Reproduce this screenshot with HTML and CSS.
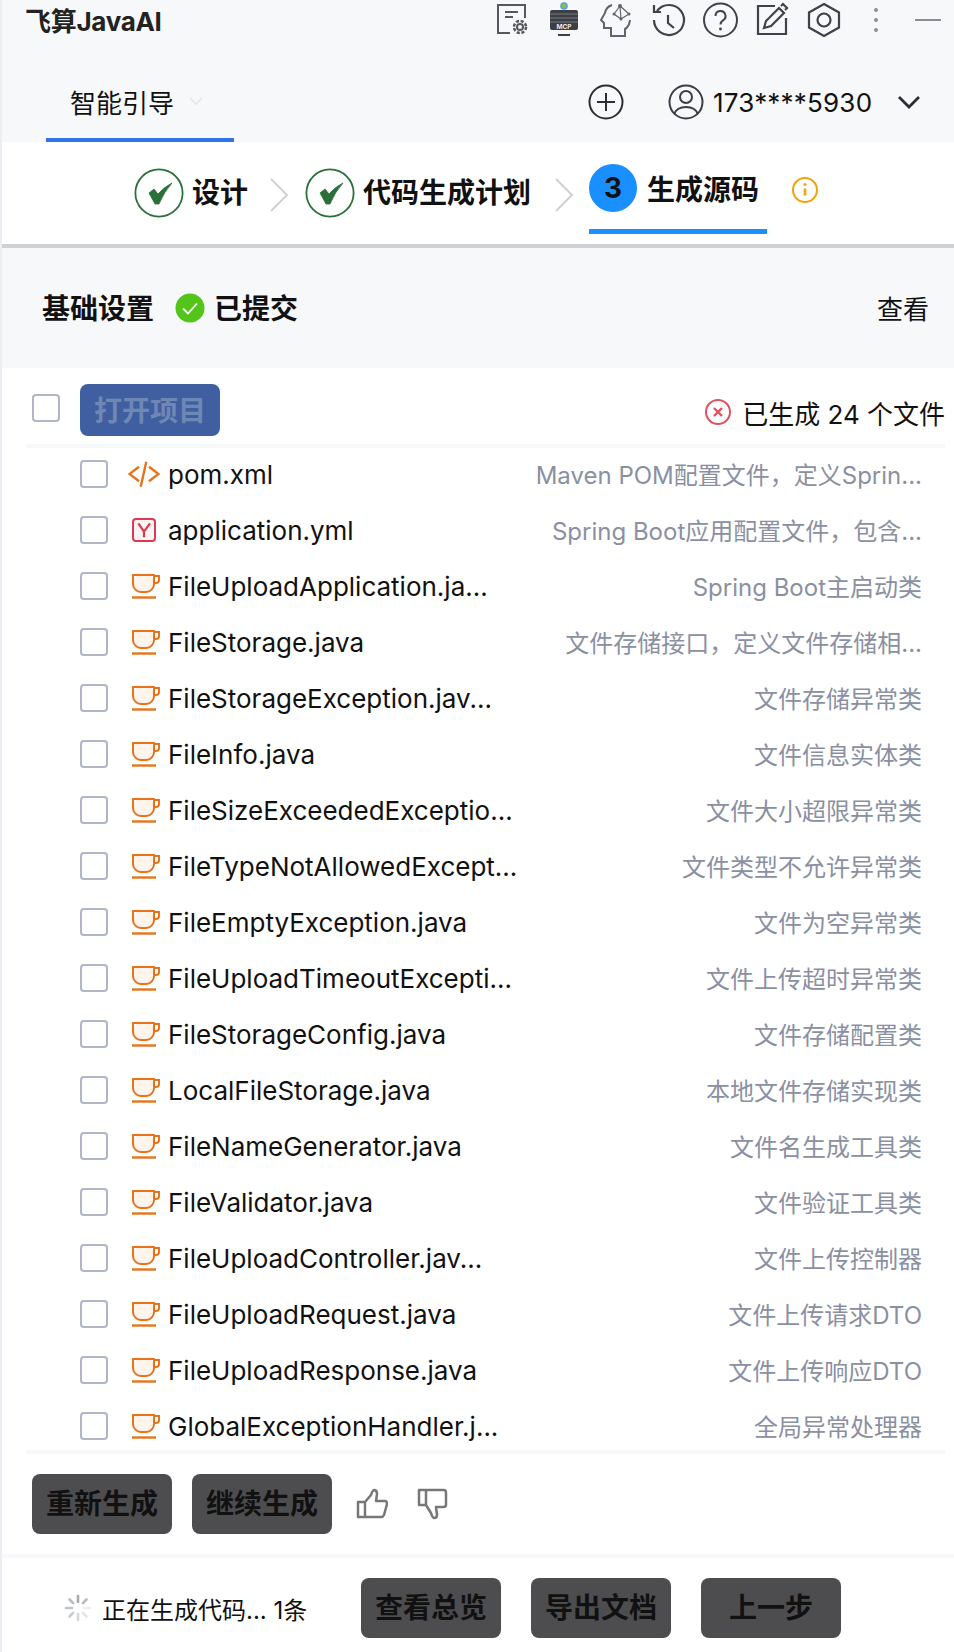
FILE: index.html
```html
<!DOCTYPE html>
<html lang="zh-CN">
<head>
    <meta charset="UTF-8">
    <meta name="viewport" content="width=device-width, initial-scale=1.0">
    <title>飞算JavaAI</title>
    <link rel="stylesheet" href="styles.css">
</head>
<body>
    <svg class="defs" width="0" height="0">
        <symbol id="cup" viewBox="0 0 32 30">
            <path d="M5 4h21v9a8 8 0 0 1-8 8h-5a8 8 0 0 1-8-8z" fill="#fff4ec" stroke="#e8731a" stroke-width="2"/>
            <path d="M26 5h5v4a3 3 0 0 1-3 3h-2" fill="none" stroke="#e8731a" stroke-width="2"/>
            <path d="M4 26.500h24" stroke="#e8731a" stroke-width="2.400"/>
        </symbol>
        <symbol id="tick" viewBox="0 0 50 50">
            <circle cx="25" cy="25" r="23.600" fill="#fff" stroke="#2a7038" stroke-width="1.800"/>
            <path d="M15 25l5-4 4 5q6-7 14-11-8 9-13 21h-4z" fill="#2a7038" stroke="#2a7038" stroke-width="0.800" stroke-linejoin="round"/>
        </symbol>
        <symbol id="step-arrow" viewBox="0 0 20 34">
            <path d="M2 1l16 16L2 33" fill="none" stroke="#cfcfcf" stroke-width="1.800"/>
        </symbol>
    </svg>

    <header class="top">
        <div class="title-bar">
            <span class="app-name">飞算JavaAI</span>
            <div class="tools">
                <svg class="tool" viewBox="0 0 36 36" fill="none" stroke="#55585f" stroke-width="2">
                    <path d="M15 31H3V3h27v13"/>
                    <path d="M10 10h13M10 15h8"/>
                    <circle cx="25" cy="25" r="3"/>
                    <circle cx="25" cy="25" r="6" stroke-dasharray="3.100 1.600" stroke-width="2.600"/>
                </svg>
                <svg class="tool" viewBox="0 0 36 36">
                    <circle cx="17" cy="4" r="3" fill="#8bc34a" stroke="#5a9fe0" stroke-width="1.600"/>
                    <rect x="3" y="8" width="28" height="20" rx="2" fill="#3c3f46"/>
                    <path d="M3 12h28M3 16h28M3 20h28" stroke="#777a80" stroke-width="1"/>
                    <text class="mcp" x="17" y="26.500" text-anchor="middle">MCP</text>
                    <path d="M11 33h12" stroke="#3c3f46" stroke-width="2"/>
                </svg>
                <svg class="tool" viewBox="0 0 36 36" fill="none" stroke="#5f646d" stroke-width="2">
                    <path d="M13 3Q7 5 6 11L2 18l3 3v5h7v8h14v-7q4-2 5-9"/>
                    <path d="M21 4l-6 8 7 5 8-5zM21 4l1 13" stroke-width="1.200"/>
                    <circle cx="21" cy="4" r="2" fill="#5f646d" stroke="none"/>
                    <circle cx="15" cy="12" r="1.500" fill="#5f646d" stroke="none"/>
                    <circle cx="30" cy="12" r="1.500" fill="#5f646d" stroke="none"/>
                    <circle cx="22" cy="17" r="1.500" fill="#5f646d" stroke="none"/>
                </svg>
                <svg class="tool" viewBox="0 0 36 36" fill="none" stroke="#3f424a" stroke-width="2.200">
                    <path d="M6 9a15 15 0 1 1-3 9"/>
                    <path d="M3 3v7h7"/>
                    <path d="M17 13v8l6 5"/>
                </svg>
                <svg class="tool" viewBox="0 0 36 36" fill="none" stroke="#3f424a" stroke-width="2">
                    <circle cx="17.500" cy="18" r="16.500"/>
                    <path d="M12.500 14a5 5 0 1 1 7.500 4.300q-2.500 1.600-2.500 4.200"/>
                    <circle cx="17.500" cy="27" r="1.400" fill="#3f424a" stroke="none"/>
                </svg>
                <svg class="tool" viewBox="0 0 36 36" fill="none" stroke="#3f424a" stroke-width="2.200">
                    <path d="M20 4H3v28h28V16"/>
                    <path d="M9 26l2-7L24 6l5 5-13 13zM26 4l2-2 4 4-2 2"/>
                </svg>
                <svg class="tool" viewBox="0 0 36 36" fill="none" stroke="#3f424a" stroke-width="2.200">
                    <path d="M17 2l15 8.500v15L17 34 2 25.500v-15z"/>
                    <circle cx="17" cy="18" r="6.500"/>
                </svg>
                <svg class="tool" viewBox="0 0 36 36" fill="#8a8e98">
                    <circle cx="17" cy="8" r="2"/>
                    <circle cx="17" cy="18" r="2"/>
                    <circle cx="17" cy="28" r="2"/>
                </svg>
                <svg class="tool" viewBox="0 0 36 36">
                    <path d="M4 18h26" stroke="#8a8e98" stroke-width="2"/>
                </svg>
            </div>
        </div>
        <div class="tab-bar">
            <div class="tab">
                <span>智能引导</span>
                <svg class="tab-caret" viewBox="0 0 16 10" fill="none" stroke="#e4e6ea" stroke-width="1.600"><path d="M2 2l6 6 6-6"/></svg>
            </div>
            <svg class="tab-plus" viewBox="0 0 36 36" fill="none" stroke="#2b2e35" stroke-width="2">
                <circle cx="18" cy="18" r="16.500"/>
                <path d="M18 9v18M9 18h18"/>
            </svg>
            <svg class="tab-user" viewBox="0 0 36 36" fill="none" stroke="#3a3d45" stroke-width="2">
                <circle cx="18" cy="18" r="16.500"/>
                <circle cx="18" cy="13" r="6"/>
                <path d="M6 30q3-7 12-7t12 7"/>
            </svg>
            <span class="phone">173****5930</span>
            <svg class="tab-more" viewBox="0 0 24 14" fill="none" stroke="#2b2e35" stroke-width="2.800"><path d="M2 2l10 10L22 2"/></svg>
        </div>
    </header>

    <nav class="steps">
        <div class="step">
            <svg class="step-icon"><use href="#tick"/></svg>
            <span class="step-label">设计</span>
        </div>
        <svg class="step-arrow"><use href="#step-arrow"/></svg>
        <div class="step">
            <svg class="step-icon"><use href="#tick"/></svg>
            <span class="step-label">代码生成计划</span>
        </div>
        <svg class="step-arrow step-arrow-last"><use href="#step-arrow"/></svg>
        <div class="step step-current">
            <span class="step-num">3</span>
            <span>生成源码</span>
        </div>
        <svg class="step-info" viewBox="0 0 26 26" fill="none" stroke="#f0a30a" stroke-width="2">
            <circle cx="13" cy="13" r="12"/>
            <path d="M13 11.500v7" stroke-width="2.600"/>
            <circle cx="13" cy="7.500" r="1.500" fill="#f0a30a" stroke="none"/>
        </svg>
    </nav>

    <section class="base-bar">
        <strong>基础设置</strong>
        <svg class="done" viewBox="0 0 30 30">
            <circle cx="15" cy="15" r="14.500" fill="#52c41a"/>
            <path d="M8 15.500l5 5 9-10" fill="none" stroke="#fff" stroke-width="1.800"/>
        </svg>
        <strong>已提交</strong>
        <a class="base-view">查看</a>
    </section>

    <main class="files">
        <div class="files-head">
            <span class="check"></span>
            <span class="open-btn">打开项目</span>
            <svg class="fail" viewBox="0 0 26 26" fill="none" stroke="#e0525e" stroke-width="2">
                <circle cx="13" cy="13" r="12"/>
                <path d="M9 9l8 8M17 9l-8 8" stroke-width="2.400"/>
            </svg>
            <span class="count">已生成 24 个文件</span>
        </div>
        <ul class="file-list">
            <li>
                <span class="check"></span>
                <svg class="file-icon" viewBox="0 0 32 30" fill="none" stroke="#e8731a" stroke-width="2.400">
                    <path d="M11 7.700L1.500 15l9.500 7.300M21 7.700L30.500 15 21 22.300M18.300 2.700l-5.600 25"/>
                </svg>
                <span class="name">pom.xml</span>
                <span class="desc">Maven POM配置文件，定义Sprin...</span>
            </li>
            <li>
                <span class="check"></span>
                <svg class="file-icon" viewBox="0 0 32 30">
                    <rect x="5" y="4" width="22" height="22" rx="3" fill="#fff4f5" stroke="#e0394f" stroke-width="2"/>
                    <path d="M10.300 8.300l5.700 8.400 6-8.400M16 16.700v5.600" fill="none" stroke="#e0394f" stroke-width="2.200"/>
                </svg>
                <span class="name">application.yml</span>
                <span class="desc">Spring Boot应用配置文件，包含...</span>
            </li>
            <li><span class="check"></span><svg class="file-icon"><use href="#cup"/></svg><span class="name">FileUploadApplication.ja...</span><span class="desc">Spring Boot主启动类</span></li>
            <li><span class="check"></span><svg class="file-icon"><use href="#cup"/></svg><span class="name">FileStorage.java</span><span class="desc">文件存储接口，定义文件存储相...</span></li>
            <li><span class="check"></span><svg class="file-icon"><use href="#cup"/></svg><span class="name">FileStorageException.jav...</span><span class="desc">文件存储异常类</span></li>
            <li><span class="check"></span><svg class="file-icon"><use href="#cup"/></svg><span class="name">FileInfo.java</span><span class="desc">文件信息实体类</span></li>
            <li><span class="check"></span><svg class="file-icon"><use href="#cup"/></svg><span class="name">FileSizeExceededExceptio...</span><span class="desc">文件大小超限异常类</span></li>
            <li><span class="check"></span><svg class="file-icon"><use href="#cup"/></svg><span class="name">FileTypeNotAllowedExcept...</span><span class="desc">文件类型不允许异常类</span></li>
            <li><span class="check"></span><svg class="file-icon"><use href="#cup"/></svg><span class="name">FileEmptyException.java</span><span class="desc">文件为空异常类</span></li>
            <li><span class="check"></span><svg class="file-icon"><use href="#cup"/></svg><span class="name">FileUploadTimeoutExcepti...</span><span class="desc">文件上传超时异常类</span></li>
            <li><span class="check"></span><svg class="file-icon"><use href="#cup"/></svg><span class="name">FileStorageConfig.java</span><span class="desc">文件存储配置类</span></li>
            <li><span class="check"></span><svg class="file-icon"><use href="#cup"/></svg><span class="name">LocalFileStorage.java</span><span class="desc">本地文件存储实现类</span></li>
            <li><span class="check"></span><svg class="file-icon"><use href="#cup"/></svg><span class="name">FileNameGenerator.java</span><span class="desc">文件名生成工具类</span></li>
            <li><span class="check"></span><svg class="file-icon"><use href="#cup"/></svg><span class="name">FileValidator.java</span><span class="desc">文件验证工具类</span></li>
            <li><span class="check"></span><svg class="file-icon"><use href="#cup"/></svg><span class="name">FileUploadController.jav...</span><span class="desc">文件上传控制器</span></li>
            <li><span class="check"></span><svg class="file-icon"><use href="#cup"/></svg><span class="name">FileUploadRequest.java</span><span class="desc">文件上传请求DTO</span></li>
            <li><span class="check"></span><svg class="file-icon"><use href="#cup"/></svg><span class="name">FileUploadResponse.java</span><span class="desc">文件上传响应DTO</span></li>
            <li><span class="check"></span><svg class="file-icon"><use href="#cup"/></svg><span class="name">GlobalExceptionHandler.j...</span><span class="desc">全局异常处理器</span></li>
        </ul>
        <div class="actions">
            <button class="dark-btn">重新生成</button>
            <button class="dark-btn">继续生成</button>
            <svg class="thumb" viewBox="0 0 32 32" fill="none" stroke="#777" stroke-width="2.500" stroke-linejoin="round">
                <path d="M2 14h7v15H2zM9 14l6-7q1-4 3-5 3 0 3 4l-1 7h9q2 0 2 3l-3 11q-1 2-3 2H9"/>
            </svg>
            <svg class="thumb" viewBox="0 0 32 32" fill="none" stroke="#777" stroke-width="2.500" stroke-linejoin="round">
                <path d="M3 2h7v15H3zM10 2h18q2 0 2 3v12q0 2-3 2h-7l1 8q0 3-3 3-2-1-3-5l-5-8"/>
            </svg>
        </div>
    </main>

    <footer class="status">
        <svg class="spinner" viewBox="0 0 28 28" stroke-width="2.600" stroke-linecap="round">
            <path d="M14 2v6" stroke="#a5a9b5"/>
            <path d="M22.500 5.500l-3.600 3.600" stroke="#b5b8c2"/>
            <path d="M26 14h-6" stroke="#eceef1"/>
            <path d="M22.500 22.500l-3.600-3.600" stroke="#e2e4e9"/>
            <path d="M14 26v-6" stroke="#d5d8df"/>
            <path d="M5.500 22.500l3.600-3.600" stroke="#c8cbd3"/>
            <path d="M2 14h6" stroke="#c0c3cc"/>
            <path d="M5.500 5.500l3.600 3.600" stroke="#b8bbc5"/>
        </svg>
        <span class="status-text">正在生成代码... 1条</span>
        <button class="dark-btn">查看总览</button>
        <button class="dark-btn">导出文档</button>
        <button class="dark-btn">上一步</button>
    </footer>
</body>
</html>
```

FILE: styles.css
```css
* {
    box-sizing: border-box;
}
body {
    margin: 0;
    width: 954px;
    height: 1652px;
    overflow: hidden;
    background: #fff;
    border-left: 2px solid #eceef4;
    color: #111;
    font-family: Inter, "Noto Sans CJK SC", sans-serif;
    font-size: 26px;
}
.defs {
    display: block;
    height: 0;
}
.top {
    height: 142px;
    background: #f7f8fa;
}
.title-bar {
    display: flex;
    align-items: center;
    height: 40px;
    padding-left: 23px;
}
.app-name {
    margin-top: -2px;
    font-weight: 700;
    font-size: 26px;
    letter-spacing: -0.3px;
    color: #222;
}
.tools {
    display: flex;
    gap: 16px;
    margin-left: auto;
    padding-right: 7px;
}
.tool {
    width: 36px;
    height: 36px;
}
.mcp {
    font-size: 6.500px;
    font-weight: 700;
    fill: #e8e8e8;
}
.tab-bar {
    display: flex;
    align-items: center;
    height: 102px;
    padding: 22px 0 0 44px;
}
.tab {
    display: flex;
    align-items: center;
    align-self: stretch;
    width: 188px;
    padding: 2px 0 0 24px;
    border-bottom: 4px solid #2f74ea;
}
.tab-caret {
    width: 16px;
    height: 10px;
    margin-left: 14px;
}
.tab-plus {
    width: 36px;
    height: 36px;
    margin-left: 354px;
}
.tab-user {
    width: 36px;
    height: 36px;
    margin-left: 44px;
}
.phone {
    margin-left: 9px;
    letter-spacing: 0.2px;
}
.tab-more {
    width: 24px;
    height: 14px;
    margin-left: 25px;
}
.steps {
    display: flex;
    align-items: flex-start;
    height: 106px;
    padding: 26px 0 0 132px;
    border-bottom: 4px solid #d0d0d0;
}
.step {
    display: flex;
    align-items: center;
    gap: 8px;
    height: 50px;
    font-size: 28px;
    font-weight: 700;
}
.step-icon {
    width: 50px;
    height: 50px;
}
.step-label {
    margin-top: -4px;
}
.step-arrow {
    width: 20px;
    height: 34px;
    margin: 10px 16px 0 21px;
}
.step-arrow-last {
    margin: 10px 15px 0 23px;
}
.step-current {
    gap: 10px;
    width: 178px;
    height: 70px;
    margin-top: -4px;
    padding-bottom: 17px;
    border-bottom: 5px solid #1a8fff;
}
.step-num {
    display: flex;
    align-items: center;
    justify-content: center;
    width: 48px;
    height: 48px;
    border-radius: 50%;
    background: #1a8fff;
    font-size: 28px;
}
.step-info {
    width: 26px;
    height: 26px;
    margin: 9px 0 0 25px;
}
.base-bar {
    display: flex;
    align-items: center;
    height: 120px;
    padding: 0 25px 0 40px;
    background: #f7f8fa;
    font-size: 28px;
}
.base-bar strong,
.base-view {
    margin-top: -2px;
}
.done {
    width: 30px;
    height: 30px;
    margin: 0 9px 0 21px;
}
.base-view {
    margin-left: auto;
    font-size: 26px;
}
.files {
    padding-left: 24px;
}
.files-head {
    display: flex;
    align-items: center;
    height: 80px;
    width: 919px;
    padding: 16px 0 8px 6px;
    border-bottom: 4px solid #f7f8fa;
}
.files-head .check {
    margin-top: -4px;
}
.check {
    flex: none;
    width: 28px;
    height: 28px;
    border: 2px solid #b0b6c8;
    border-radius: 4px;
    background: #fff;
}
.open-btn {
    display: flex;
    align-items: center;
    justify-content: center;
    width: 140px;
    height: 52px;
    margin-left: 20px;
    padding-bottom: 2px;
    border-radius: 8px;
    background: #3f5fa0;
    color: #6f87b5;
    font-size: 28px;
    font-weight: 700;
}
.fail {
    width: 26px;
    height: 26px;
    margin-left: auto;
    margin-top: 4px;
}
.count {
    margin-left: 11px;
    margin-top: 4px;
    font-size: 26px;
}
.file-list {
    list-style: none;
    width: 919px;
    height: 1008px;
    margin: -2px 0 0;
    padding: 0 0 0 54px;
    border-bottom: 4px solid #f7f8fa;
}
.file-list li {
    display: flex;
    align-items: center;
    height: 56px;
}
.file-icon {
    flex: none;
    width: 32px;
    height: 30px;
    margin-left: 20px;
}
.name {
    margin: 1px 0 0 8px;
    font-size: 26px;
}
.desc {
    margin: -2px 23px 0 auto;
    color: #8a90a2;
    font-size: 24px;
}
.actions {
    display: flex;
    align-items: center;
    gap: 20px;
    height: 100px;
    padding-left: 6px;
}
.dark-btn {
    width: 140px;
    height: 60px;
    padding: 0 0 4px;
    border: none;
    border-radius: 8px;
    background: #4d4d4f;
    color: #111;
    font-family: inherit;
    font-size: 28px;
    font-weight: 700;
}
.thumb {
    width: 32px;
    height: 32px;
    margin: 0 4px;
}
.status {
    display: flex;
    align-items: center;
    gap: 30px;
    height: 98px;
    padding: 20px 0 14px 62px;
    border-top: 4px solid #f7f8fa;
}
.spinner {
    width: 28px;
    height: 28px;
    margin-right: -20px;
}
.status-text {
    width: 229px;
    font-size: 24px;
}
```
